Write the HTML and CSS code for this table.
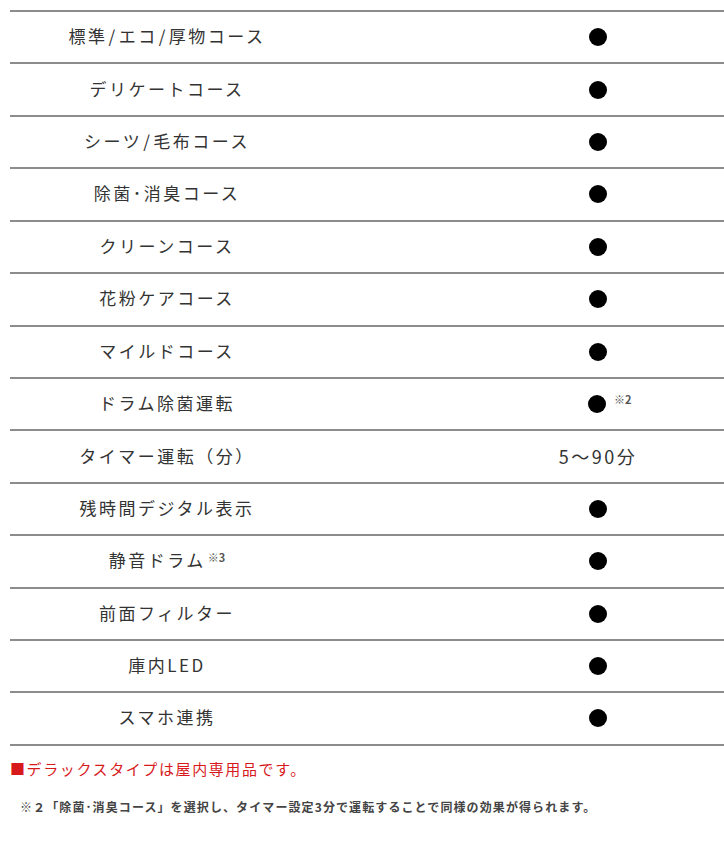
FILE: index.html
```html
<!DOCTYPE html>
<html lang="ja">
<head>
<meta charset="utf-8">
<link rel="stylesheet" href="styles.css">
</head>
<body>
<div class="page">
  <div class="spec">
    <div class="row"><div class="name">標準<span class="sl">/</span>エコ<span class="sl">/</span>厚物コース</div><div class="val"><span class="dot"></span></div></div>
    <div class="row"><div class="name">デリケートコース</div><div class="val"><span class="dot"></span></div></div>
    <div class="row"><div class="name">シーツ<span class="sl">/</span>毛布コース</div><div class="val"><span class="dot"></span></div></div>
    <div class="row"><div class="name">除菌･消臭コース</div><div class="val"><span class="dot"></span></div></div>
    <div class="row"><div class="name">クリーンコース</div><div class="val"><span class="dot"></span></div></div>
    <div class="row"><div class="name">花粉ケアコース</div><div class="val"><span class="dot"></span></div></div>
    <div class="row"><div class="name">マイルドコース</div><div class="val"><span class="dot"></span></div></div>
    <div class="row"><div class="name">ドラム除菌運転</div><div class="val"><span class="dot"></span><span class="note note-dot">※2</span></div></div>
    <div class="row"><div class="name">タイマー運転（分）</div><div class="val text">5～90分</div></div>
    <div class="row"><div class="name">残時間デジタル表示</div><div class="val"><span class="dot"></span></div></div>
    <div class="row"><div class="name">静音ドラム<span class="note">※3</span></div><div class="val"><span class="dot"></span></div></div>
    <div class="row"><div class="name">前面フィルター</div><div class="val"><span class="dot"></span></div></div>
    <div class="row"><div class="name">庫内LED</div><div class="val"><span class="dot"></span></div></div>
    <div class="row last"><div class="name">スマホ連携</div><div class="val"><span class="dot"></span></div></div>
  </div>
  <p class="red">■デラックスタイプは屋内専用品です。</p>
  <p class="foot">※２「除菌･消臭コース」を選択し、タイマー設定3分で運転することで同様の効果が得られます。</p>
</div>
</body>
</html>
```
FILE: styles.css
```css
html, body {
  margin: 0;
  padding: 0;
  background: #fff;
  overflow: hidden;
}
body {
  font-family: "Noto Sans CJK JP", "Noto Sans", sans-serif;
  color: #333;
}
.page {
  padding: 10px 0 0 10px;
  width: 714px;
  overflow: hidden;
}
.spec {
  width: 862px;
}
.row {
  display: grid;
  grid-template-columns: 314px 548px;
  height: 52.43px;
  box-sizing: border-box;
  border-top: 2px solid #8c8c8c;
  align-items: center;
}
.row.last {
  border-bottom: 2px solid #8c8c8c;
  height: 54.43px;
  padding-bottom: 2px;
}
.name {
  text-align: center;
  font-size: 17px;
  letter-spacing: 2.5px;
  line-height: 1;
  margin-top: -3px;
}
.sl {
  margin: 0 1px;
}
.val {
  display: flex;
  justify-content: center;
  align-items: center;
  font-size: 18px;
  letter-spacing: 2px;
}
.dot {
  width: 18px;
  height: 18px;
  border-radius: 50%;
  background: #000;
  display: block;
}
.note {
  font-size: 11px;
  letter-spacing: 0;
  vertical-align: 5px;
  margin-left: 2px;
  font-weight: bold;
  color: #555;
}
.note-dot {
  position: relative;
  width: 0;
  left: 6px;
  top: -5px;
  white-space: nowrap;
}
.val.text {
  font-size: 18px;
  letter-spacing: 2.5px;
  margin-top: -2px;
}
.red {
  margin: 13px 0 0 0;
  color: #d7191c;
  font-size: 15px;
  letter-spacing: 1.6px;
  line-height: 20px;
}
.foot {
  margin: 20px 0 0 10px;
  font-size: 12px;
  font-weight: bold;
  letter-spacing: 1.1px;
  line-height: 16px;
  color: #444;
}
```
